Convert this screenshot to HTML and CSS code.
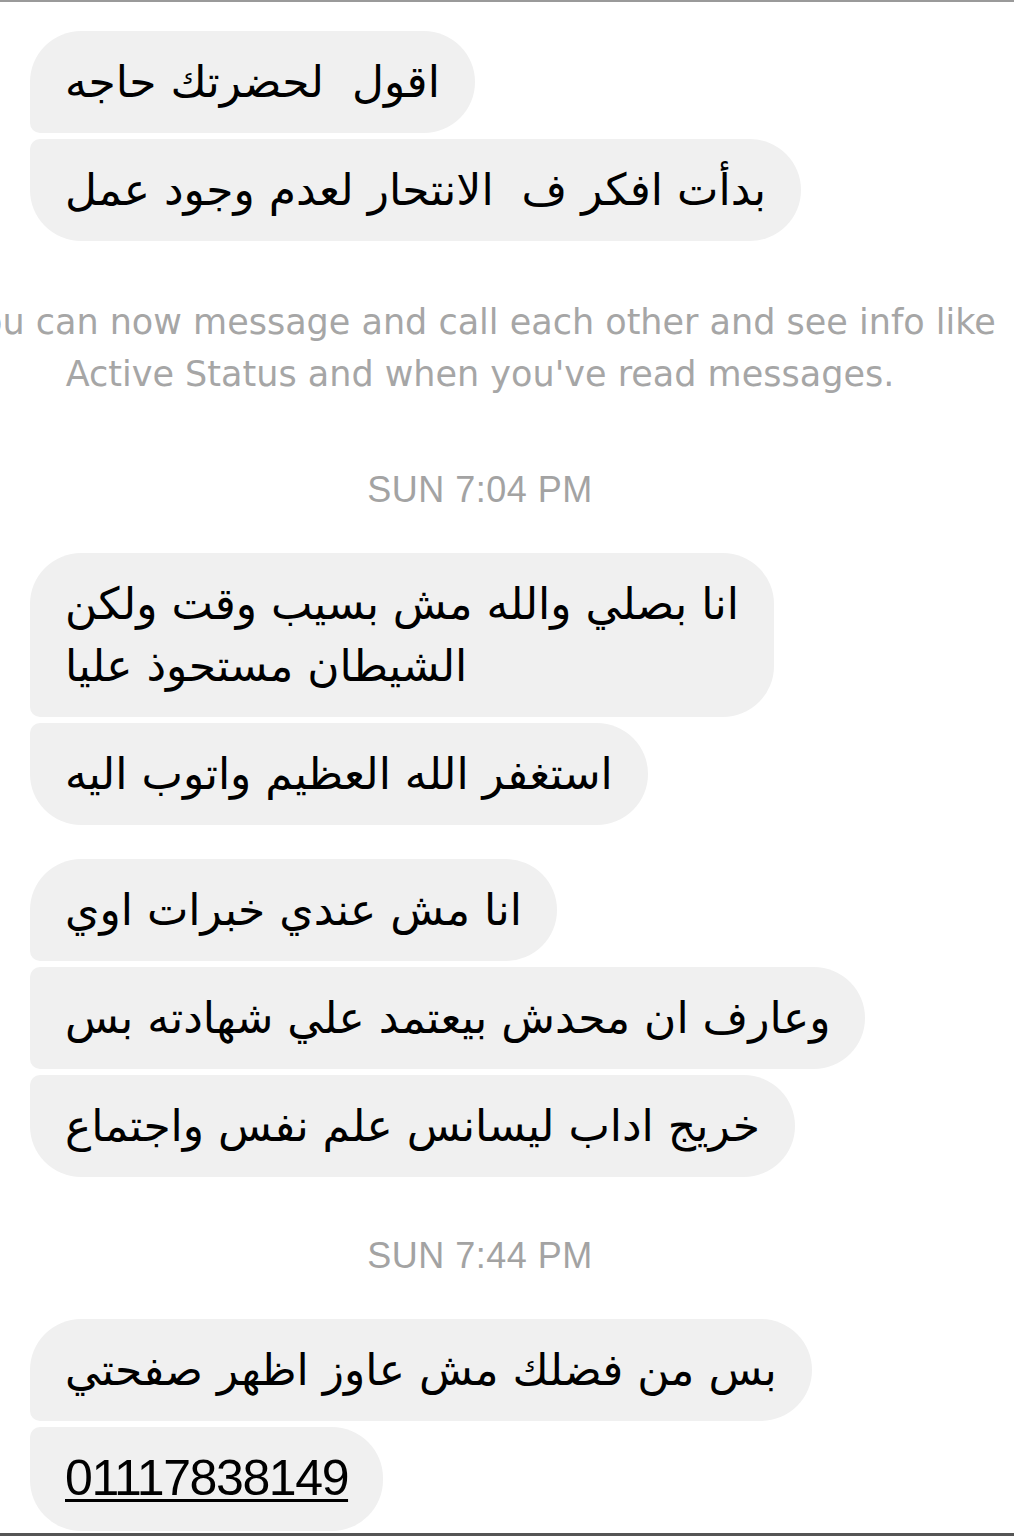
FILE: index.html
```html
<!DOCTYPE html>
<html lang="ar">
<head>
  <meta charset="UTF-8">
  <title>Chat</title>
  <link rel="stylesheet" href="styles.css">
</head>
<body>
<div class="screen">
  <div class="chat">
    <div class="group">
      <div class="bubble first">اقول  لحضرتك حاجه</div>
      <div class="bubble last">بدأت افكر ف  الانتحار لعدم وجود عمل</div>
    </div>

    <div class="notice">
      <span>You can now message and call each other and see info like</span>
      <span>Active Status and when you've read messages.</span>
    </div>

    <div class="stamp">SUN 7:04 PM</div>

    <div class="group">
      <div class="bubble first">انا بصلي والله مش بسيب وقت ولكن<br>الشيطان مستحوذ عليا</div>
      <div class="bubble last">استغفر الله العظيم واتوب اليه</div>
    </div>

    <div class="group spaced">
      <div class="bubble first">انا مش عندي خبرات اوي</div>
      <div class="bubble">وعارف ان محدش بيعتمد علي شهادته بس</div>
      <div class="bubble last">خريج اداب ليسانس علم نفس واجتماع</div>
    </div>

    <div class="stamp second">SUN 7:44 PM</div>

    <div class="group">
      <div class="bubble first">بس من فضلك مش عاوز اظهر صفحتي</div>
      <div class="bubble last"><a class="phone" href="#">01117838149</a></div>
    </div>
  </div>
</div>
</body>
</html>
```

FILE: styles.css
```css
* {
  margin: 0;
  padding: 0;
  box-sizing: border-box;
}

html, body {
  background: #fff;
  overflow: hidden;
}

.screen {
  width: 1014px;
  height: 1536px;
  border-top: 2px solid #9a9a9a;
  border-bottom: 3px solid #555;
  overflow: hidden;
}

.chat {
  width: 960px;
  padding-top: 29px;
  display: flex;
  flex-direction: column;
}

.group {
  display: flex;
  flex-direction: column;
  align-items: flex-start;
  gap: 6px;
  padding-left: 30px;
}

.group.spaced {
  margin-top: 34px;
}

.bubble {
  background-color: #f0f0f0;
  color: #000;
  font-family: "DejaVu Sans", sans-serif;
  font-size: 44px;
  line-height: 62px;
  padding: 20px 35px;
  direction: rtl;
  text-align: left;
  white-space: pre;
  border-radius: 51px;
  border-top-left-radius: 10px;
  border-bottom-left-radius: 10px;
}

.bubble.first {
  border-top-left-radius: 51px;
}

.bubble.last {
  border-bottom-left-radius: 51px;
}

.phone {
  direction: ltr;
  display: inline-block;
  color: #000;
  font-family: "Liberation Sans", Arial, sans-serif;
  font-size: 50px;
  letter-spacing: -1.4px;
  text-decoration: underline;
  text-decoration-thickness: 3px;
  text-underline-offset: 4px;
}

.notice {
  margin-top: 55px;
  display: flex;
  flex-direction: column;
  align-items: center;
  font-family: "DejaVu Sans", sans-serif;
  font-size: 35px;
  line-height: 52px;
  color: #a6a6a6;
}

.notice span {
  white-space: nowrap;
}

.stamp {
  margin: 64px 0 37px;
  text-align: center;
  font-family: "Liberation Sans", Arial, sans-serif;
  font-size: 36px;
  letter-spacing: 0.5px;
  line-height: 52px;
  color: #a3a3a3;
}

.stamp.second {
  margin-top: 53px;
}
```
